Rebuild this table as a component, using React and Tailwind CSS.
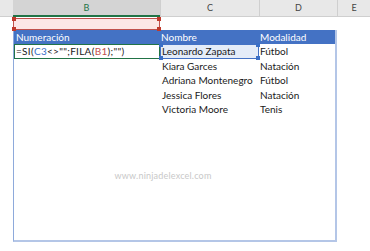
import React from "react";

const font = { fontFamily: 'Lato, "Liberation Sans", Arial, sans-serif' };

function Handle({ pos, color }) {
  const p = {
    tl: "-left-[2px] -top-[2px]",
    tr: "-right-[2px] -top-[2px]",
    bl: "-left-[2px] -bottom-[2px]",
    br: "-right-[2px] -bottom-[2px]",
  }[pos];
  return <span className={`absolute w-[4px] h-[4px] ${p} ${color}`} />;
}

export default function App() {
  const rows = [
    ["Kiara Garces", "Natación"],
    ["Adriana Montenegro", "Fútbol"],
    ["Jessica Flores", "Natación"],
    ["Victoria Moore", "Tenis"],
  ];
  return (
    <div className="w-[370px] h-[251px] bg-white overflow-hidden flex flex-col text-[10px] text-[#1a1a1a]" style={font}>
      {/* column headers */}
      <div className="flex h-[17px] bg-[#e8e8e8] text-[9px] text-[#444] shrink-0">
        <div className="w-[13px] border-b border-[#cfcfcf]" />
        <div className="w-[147px] bg-[#d4d4d4] border-b-2 border-[#217346] text-[#217346] flex items-center justify-center">B</div>
        <div className="w-[99px] border-l border-b border-[#cfcfcf] flex items-center justify-center">C</div>
        <div className="w-[78px] border-l border-b border-[#cfcfcf] flex items-center justify-center">D</div>
        <div className="flex-1 border-l border-b border-[#cfcfcf] flex items-center justify-center">E</div>
      </div>
      <div className="flex pl-[13px] pt-[1px]">
        <div className="w-[324px] flex flex-col">
          {/* row 1 */}
          <div className="flex h-[12px]">
            <div className="relative w-[147px] bg-[#fce6e6] border border-[#c0504d]">
              <Handle pos="tl" color="bg-[#c0392b]" />
              <Handle pos="tr" color="bg-[#c0392b]" />
              <Handle pos="bl" color="bg-[#c0392b]" />
              <Handle pos="br" color="bg-[#c0392b]" />
            </div>
          </div>
          {/* table */}
          <div className="flex flex-col h-[212px] border-l border-[#8eaadb] border-r-2 border-b-2 border-r-[#b4c6e7] border-b-[#b4c6e7]">
            <div className="flex h-[14px] bg-[#4472c4] text-white items-center shrink-0">
              <div className="w-[146px] pl-[2px]">Numeración</div>
              <div className="w-[99px] pl-[1px]">Nombre</div>
              <div className="flex-1 pl-[1px]">Modalidad</div>
            </div>
            <div className="flex h-[15px] items-center shrink-0">
              <div className="w-[146px] h-full border border-[#217346] flex items-center pl-[1px] whitespace-nowrap tracking-[0.3px]">
                =SI(<span className="text-[#3a6fc6]">C3</span>&lt;&gt;"";FILA(<span className="text-[#c0504d]">B1</span>);"")
              </div>
              <div className="relative w-[99px] h-full bg-[#e4ecf8] border border-[#4472c4] flex items-center pl-[1px]">
                Leonardo Zapata
                <Handle pos="tl" color="bg-[#3a6fc6]" />
                <Handle pos="tr" color="bg-[#3a6fc6]" />
                <Handle pos="bl" color="bg-[#3a6fc6]" />
                <Handle pos="br" color="bg-[#3a6fc6]" />
              </div>
              <div className="flex-1 pl-[1px]">Fútbol</div>
            </div>
            {rows.map(([n, m]) => (
              <div key={n} className="flex h-[14.5px] items-center shrink-0">
                <div className="w-[146px]" />
                <div className="w-[99px] pl-[2px] whitespace-nowrap">{n}</div>
                <div className="flex-1 pl-[1px]">{m}</div>
              </div>
            ))}
            <div className="flex justify-center pt-[52px] pr-[23px]">
              <span className="text-[9px] text-[#c8c8c8] tracking-[0.2px]">www.ninjadelexcel.com</span>
            </div>
          </div>
        </div>
      </div>
    </div>
  );
}
